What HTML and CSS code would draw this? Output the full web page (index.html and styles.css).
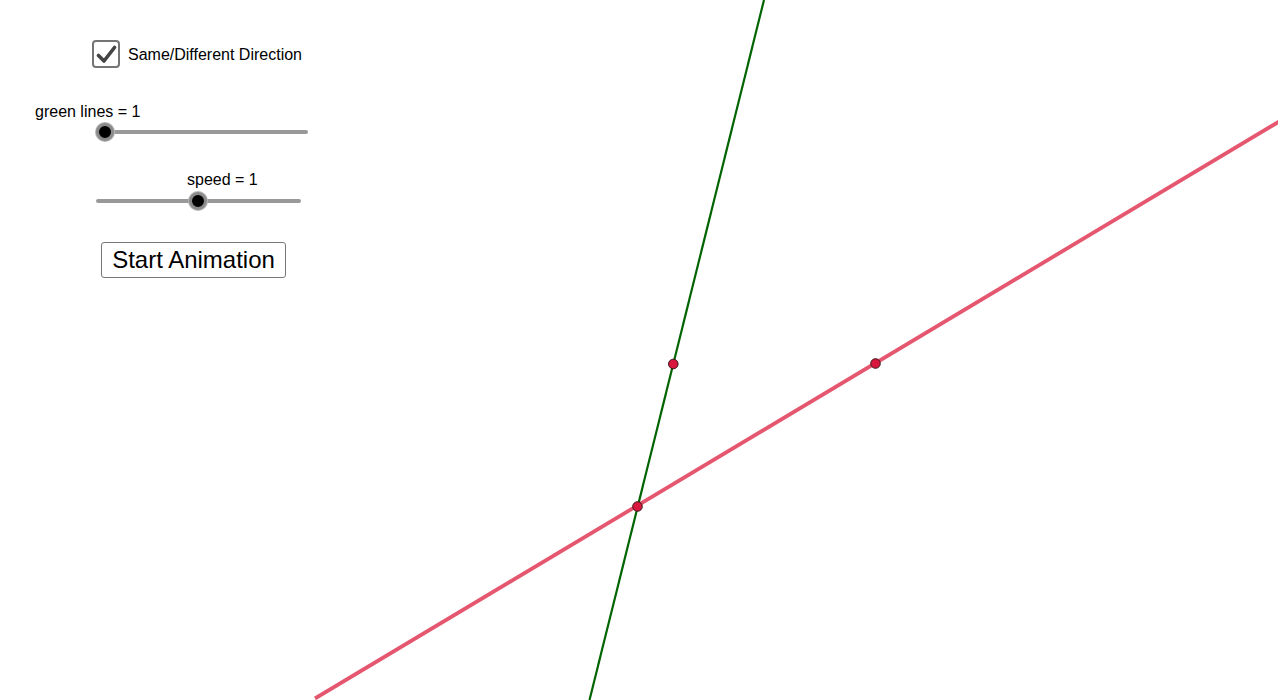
FILE: index.html
```html
<!DOCTYPE html>
<html>
<head>
<meta charset="utf-8">
<link rel="stylesheet" href="styles.css">
</head>
<body>
<div class="app">
  <svg class="canvas" width="1278" height="700" viewBox="0 0 1278 700">
    <line x1="764" y1="0" x2="589.5" y2="700" stroke="#006400" stroke-width="2.2"/>
    <line x1="315" y1="698.5" x2="1280" y2="121" stroke="#E5566F" stroke-width="3.8"/>
    <circle cx="673.3" cy="364" r="4.8" fill="#D9163E" stroke="#3a1a1a" stroke-width="1"/>
    <circle cx="875.5" cy="363.5" r="4.8" fill="#D9163E" stroke="#3a1a1a" stroke-width="1"/>
    <circle cx="637.5" cy="506.5" r="4.8" fill="#D9163E" stroke="#3a1a1a" stroke-width="1"/>
  </svg>
  <div class="controls">
    <label class="check-row">
      <span class="checkbox">
        <svg width="22" height="22" viewBox="0 0 22 22">
          <path d="M3.5 12.5 L9 18 L19.5 4.5" fill="none" stroke="#444" stroke-width="3.6" stroke-linecap="round" stroke-linejoin="round"/>
        </svg>
      </span>
      <span class="check-label">Same/Different Direction</span>
    </label>
    <div class="slider-block slider-green">
      <div class="slider-label">green lines = 1</div>
      <div class="track track-green">
        <span class="knob knob-start"></span>
      </div>
    </div>
    <div class="slider-block slider-speed">
      <div class="slider-label">speed = 1</div>
      <div class="track track-speed">
        <span class="knob knob-mid"></span>
      </div>
    </div>
    <button class="start-btn">Start Animation</button>
  </div>
</div>
</body>
</html>
```
FILE: styles.css
```css
html, body {
  margin: 0;
  padding: 0;
  background: #fff;
  overflow: hidden;
}
.app {
  position: relative;
  width: 1278px;
  height: 700px;
  font-family: "Liberation Sans", Arial, sans-serif;
  color: #000;
}
.canvas {
  position: absolute;
  left: 0;
  top: 0;
}
.controls {
  position: relative;
  display: flex;
  flex-direction: column;
  align-items: flex-start;
  padding-top: 40px;
}
.check-row {
  display: flex;
  align-items: center;
  gap: 8px;
  margin-left: 92px;
  height: 28px;
}
.checkbox {
  box-sizing: border-box;
  width: 28px;
  height: 28px;
  border: 2px solid #757575;
  border-radius: 4px;
  display: flex;
  align-items: center;
  justify-content: center;
  background: #fff;
}
.checkbox svg {
  display: block;
}
.check-label {
  font-size: 16px;
  line-height: 18px;
  padding-top: 1px;
}
.slider-block {
  display: flex;
  flex-direction: column;
}
.slider-label {
  font-size: 16px;
  line-height: 18px;
}
.slider-green {
  margin-top: 35px;
  margin-left: 35px;
}
.slider-green .track {
  margin-left: 69px;
  margin-top: 9px;
  width: 204px;
}
.slider-speed {
  margin-top: 37px;
  margin-left: 96px;
}
.slider-speed .slider-label {
  margin-left: 91px;
}
.slider-speed .track {
  margin-top: 10px;
  width: 205px;
}
.track {
  position: relative;
  height: 4px;
  border-radius: 2px;
  background: #999;
}
.knob {
  position: absolute;
  top: 50%;
  width: 12px;
  height: 12px;
  border-radius: 50%;
  background: #000;
  border: 3px solid #8a8a8a;
  box-shadow: 0 0 0 1px #b5b5b5;
  transform: translate(-50%, -50%);
  box-sizing: content-box;
}
.knob-start {
  left: 1px;
}
.knob-mid {
  left: 102px;
}
.start-btn {
  margin-top: 39px;
  margin-left: 101px;
  box-sizing: border-box;
  width: 185px;
  height: 36px;
  padding: 0;
  background: #fff;
  border: 1px solid #777;
  border-radius: 3px;
  font-family: "Liberation Sans", Arial, sans-serif;
  font-size: 24px;
  line-height: 34px;
  color: #000;
}
```
